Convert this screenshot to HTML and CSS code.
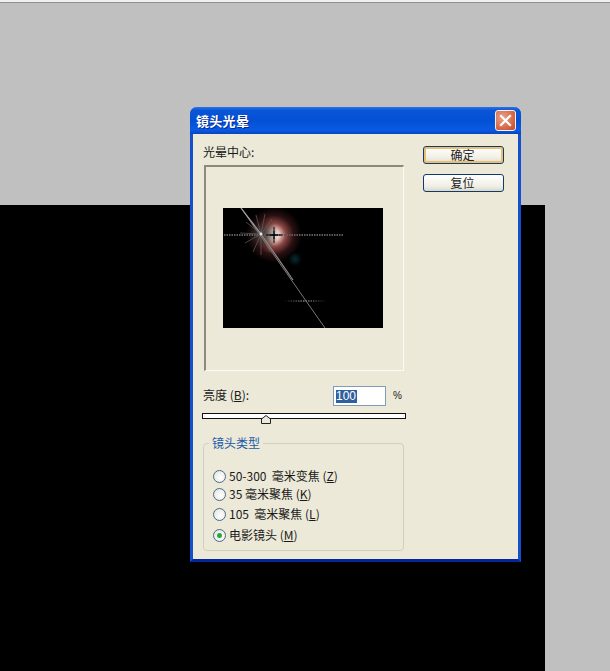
FILE: index.html
```html
<!DOCTYPE html>
<html lang="zh">
<head>
<meta charset="utf-8">
<title>镜头光晕</title>
<link rel="stylesheet" href="styles.css">
</head>
<body>
<div class="topstrip"></div>
<div class="canvas"></div>
<div class="dialog">
  <div class="titlebar">
    <span class="title">镜头光晕</span>
    <span class="close"><svg width="21" height="21" viewBox="0 0 21 21"><path d="M6 6 L15 15 M15 6 L6 15" stroke="#fff" stroke-width="2.2" stroke-linecap="square"/></svg></span>
  </div>
  <div class="body">
    <div class="main">
      <div class="left">
        <div class="label-center">光晕中心:</div>
        <div class="preview">
          <svg class="flare" width="160" height="120" viewBox="0 0 160 120">
            <defs>
              <radialGradient id="glow">
                <stop offset="0" stop-color="#fff"/>
                <stop offset=".2" stop-color="#e6c4bc"/>
                <stop offset=".42" stop-color="#8a4644"/>
                <stop offset=".7" stop-color="#2a1012"/>
                <stop offset="1" stop-color="#000"/>
              </radialGradient>
              <radialGradient id="teal">
                <stop offset="0" stop-color="#0a2a30"/>
                <stop offset="1" stop-color="#000"/>
              </radialGradient>
              <radialGradient id="halo">
                <stop offset="0" stop-color="#4a4a4a"/>
                <stop offset="1" stop-color="#000" stop-opacity="0"/>
              </radialGradient>
              <linearGradient id="fade" gradientUnits="userSpaceOnUse" x1="60" y1="0" x2="104" y2="0">
                <stop offset="0" stop-color="#000"/>
                <stop offset=".5" stop-color="#66625f"/>
                <stop offset="1" stop-color="#000"/>
              </linearGradient>
            </defs>
            <rect width="160" height="120" fill="#000"/>
            <circle cx="51" cy="27" r="28" fill="url(#glow)"/>
            <circle cx="38" cy="26" r="17" fill="url(#halo)"/>
            <circle cx="72" cy="51" r="7" fill="url(#teal)"/>
            <path d="M1 27 H120" stroke="#5e5a58" stroke-width="2" stroke-dasharray="1.5 1"/>
            <path d="M60 93 H104" stroke="url(#fade)" stroke-width="2" stroke-dasharray="1.5 1"/>
            <g stroke="#6a5e58" stroke-width="1" opacity=".7">
              <path d="M38 26 L33 7 M38 26 L42 6 M38 26 L49 11 M38 26 L23 14 M38 26 L17 25 M38 26 L22 35 M38 26 L30 44 M38 26 L38 47 M38 26 L47 44"/>
            </g>
            <path d="M18 0 L102 120" stroke="#7a767a" stroke-width="1"/>
            <path d="M18 0 L38 26" stroke="#a8a8ac" stroke-width="1.1"/>
            <path d="M38 26 L70 72" stroke="#8e8e84" stroke-width="1.2"/>
            <circle cx="38" cy="26" r="1.4" fill="#e8e8e8"/>
            <path d="M51 19 V35 M43 27 H59" stroke="#000" stroke-width="1"/>
            <path d="M51 23 V31 M47 27 H55" stroke="#000" stroke-width="1"/>
          </svg>
        </div>
        <div class="brightness-row">
          <span class="cjk">亮度 (<u>B</u>):</span>
          <span class="value-wrap"><span class="value"><span class="selected">100</span></span><span class="pct">%</span></span>
        </div>
        <div class="slider"><span class="thumb"><svg width="10" height="9" viewBox="0 0 10 9"><path d="M.5 8.5 V4 L5 .5 L9.5 4 V8.5 Z" fill="#ece9d8" stroke="#222"/></svg></span></div>
        <fieldset class="group">
          <legend class="legend">镜头类型</legend>
          <div class="radio r1"><span class="dot"></span><span class="rlabel">50-300  毫米变焦 (<u>Z</u>)</span></div>
          <div class="radio r2"><span class="dot"></span><span class="rlabel">35 毫米聚焦 (<u>K</u>)</span></div>
          <div class="radio r3"><span class="dot"></span><span class="rlabel">105  毫米聚焦 (<u>L</u>)</span></div>
          <div class="radio r4"><span class="dot on"></span><span class="rlabel">电影镜头 (<u>M</u>)</span></div>
        </fieldset>
      </div>
      <div class="right">
        <button class="btn default">确定</button>
        <button class="btn">复位</button>
      </div>
    </div>
  </div>
</div>
</body>
</html>
```
FILE: styles.css
```css
* { box-sizing: border-box; }
html, body { margin: 0; padding: 0; }
body {
  width: 610px; height: 671px; overflow: hidden; position: relative;
  background: #c0c0c0;
  font-family: "Noto Sans CJK SC", "Liberation Sans", sans-serif;
  font-size: 12px; color: #1a1a1a;
}
.topstrip { height: 3px; background: #f0f0f0; border-bottom: 1px solid #8f8f8f; }
.canvas { position: absolute; left: 0; top: 205px; width: 545px; height: 466px; background: #000; }
.dialog {
  position: absolute; left: 190px; top: 107px; width: 331px; height: 455px;
  background: #ece9d8; border: 3px solid #1450cc; border-top: 0;
  border-radius: 7px 7px 0 0; display: flex; flex-direction: column;
  border-bottom-color: #04259c;
}
.titlebar {
  height: 27px; margin: 0 -3px; padding: 0 5px 0 6px;
  display: flex; align-items: center; justify-content: space-between;
  border-radius: 7px 7px 0 0;
  background: linear-gradient(#2a74e4 0, #0a56d8 12%, #0350d4 50%, #0a5ae4 85%, #0544c0 100%);
}
.title { color: #fff; font-size: 13px; font-weight: 700; letter-spacing: .3px; text-shadow: 1px 1px 0 #0a2a90; }
.close {
  width: 21px; height: 21px; border: 1px solid #f4f0ee; border-radius: 3px;
  background: radial-gradient(circle at 35% 35%, #e8a48c, #d4603c 70%, #bc4a2c);
  display: block;
}
.close svg { display: block; margin: -1px; }
.body { flex: 1; }
.main { display: flex; padding: 0 0 0 9px; }
.left { width: 205px; flex: none; }
.label-center { margin: 10px 0 0 1px; height: 21px; line-height: 16px; font-size: 12px; }
.preview {
  margin-left: 2px; width: 200px; height: 206px;
  border: 2px solid; border-color: #8c8a7c #fbfaf4 #fbfaf4 #8c8a7c; border-width: 2px 1px 1px 2px;
  padding: 41px 0 0 17px;
}
.flare { display: block; }
.brightness-row { display: flex; justify-content: space-between; align-items: center; margin-top: 13px; height: 20px; }
.cjk { margin-left: 1px; }
.value-wrap { display: flex; align-items: center; margin: 3px 1px 0 0; }
.value {
  width: 53px; height: 20px; background: #fff; border: 1px solid #7f9db9;
  padding: 2px 0 0 2px; line-height: 14px; font-family: "Liberation Sans", sans-serif; font-size: 12px;
}
.selected { background: #2f5f9f; color: #fff; display: inline-block; line-height: 13px; padding-right: 1px; }
.pct { margin-left: 7px; width: 13px; font-family: "Liberation Sans", sans-serif; font-size: 10px; }
.slider {
  position: relative; margin: 9px 0 0 0; width: 204px; height: 6px;
  background: #fff; border: 1px solid #111; border-width: 1.5px 1px 1px;
}
.thumb { position: absolute; left: 58px; top: 1px; }
.thumb svg { display: block; }
.group {
  margin: 17px 0 0 1px; padding: 0; width: 201px; height: 115px;
  border: 1px solid #d0d0bf; border-radius: 4px; position: relative;
}
.legend { margin-left: 5px; padding: 0 3px; color: #1c5aa8; line-height: 14px; }
.radio { position: absolute; left: 9px; display: flex; align-items: center; height: 16px; line-height: 16px; }
.r1 { top: 18px; }
.r2 { top: 36px; }
.r3 { top: 56px; }
.r4 { top: 77px; }
.dot {
  width: 13px; height: 13px; border-radius: 50%; border: 1px solid #4a6a88;
  background: radial-gradient(circle at 60% 60%, #fff, #e0e0d8); flex: none; margin-right: 3px;
  position: relative;
}
.dot.on::after {
  content: ""; position: absolute; left: 3px; top: 3px; width: 5px; height: 5px; border-radius: 50%; background: #2aa63c;
}
.rlabel { font-size: 12px; white-space: pre; }
.right { display: flex; flex-direction: column; gap: 10px; margin: 12px 0 0 16px; }
.btn {
  width: 81px; height: 18px; padding: 0 2px 0 0; border: 1px solid #123a6c; border-radius: 3px;
  background: linear-gradient(#fff, #f0efe6 70%, #dcd8c8);
  font: inherit; color: #222; line-height: 14px; display: block;
}
.default { box-shadow: inset 0 0 0 2px #e8c070; }
```
